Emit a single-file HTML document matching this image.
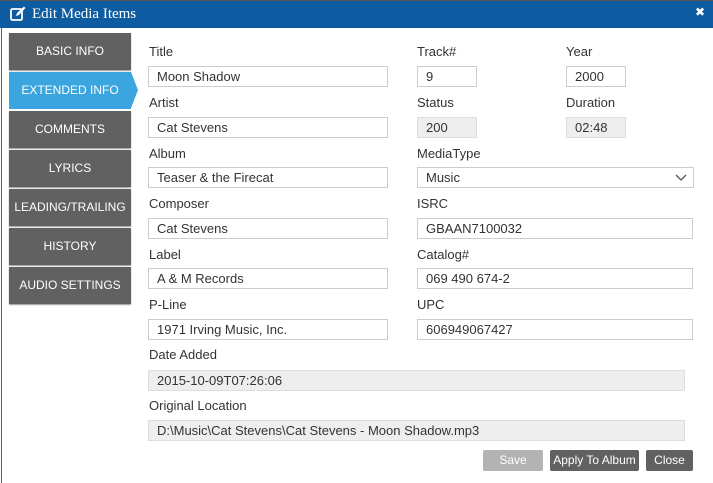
<!DOCTYPE html><html><head><style>
body{margin:0;width:713px;height:483px;overflow:hidden;background:#fff;font-family:"Liberation Sans",sans-serif;position:relative}
.t{position:absolute;left:0;top:0;width:713px;height:28px;background:#0d5ba0;color:#fff;font-family:"Liberation Serif",serif;font-size:15px;border-top:1px solid #555;box-sizing:border-box}
.tab{position:absolute;left:9px;width:122px;height:37px;background:#616161;color:#fff;font-size:12px;text-align:center;line-height:37px;box-shadow:0 1px 1px #999}
.tab.a{background:#3ba5e0;box-shadow:none}
.l{position:absolute;font-size:13px;color:#333}
.i{position:absolute;border:1px solid #ccc;font-size:13px;color:#333;line-height:19px;padding-left:8px;box-sizing:border-box;height:21px}
.g{background:#eee;border-color:#ddd}
.b{position:absolute;top:450px;height:21px;color:#fff;font-size:12px;text-align:center;line-height:21px;border-radius:2px;background:#616161}
</style></head><body>
<div class="t"><svg style="position:absolute;left:10px;top:5px" width="16" height="16" viewBox="0 0 16 16"><rect x="1" y="3" width="11" height="11" rx="1.5" fill="none" stroke="#fff" stroke-width="1.8"/><path d="M6 10 L7 7 L14 0.5 L15.5 2 L9 9 Z" fill="#fff"/></svg><span style="position:absolute;left:32px;top:5px">Edit Media Items</span><span style="position:absolute;right:8px;top:4px;font-family:'DejaVu Sans';font-size:12px;font-weight:bold">✖</span></div>
<div style="position:absolute;left:1px;top:28px;width:1px;height:455px;background:#2f6f80"></div>
<div class="tab" style="top:33px">BASIC INFO</div>
<div class="tab a" style="top:72px">EXTENDED INFO</div>
<div style="position:absolute;left:131px;top:72px;width:0;height:0;border-top:18.5px solid transparent;border-bottom:18.5px solid transparent;border-left:7px solid #3ba5e0"></div>
<div class="tab" style="top:111px">COMMENTS</div>
<div class="tab" style="top:150px">LYRICS</div>
<div class="tab" style="top:189px">LEADING/TRAILING</div>
<div class="tab" style="top:228px">HISTORY</div>
<div class="tab" style="top:267px">AUDIO SETTINGS</div>

<div class="l" style="left:149px;top:44px">Title</div><div class="i" style="left:148px;top:66px;width:240px">Moon Shadow</div>
<div class="l" style="left:417px;top:44px">Track#</div><div class="i" style="left:417px;top:66px;width:60px">9</div>
<div class="l" style="left:566px;top:44px">Year</div><div class="i" style="left:566px;top:66px;width:60px">2000</div>

<div class="l" style="left:149px;top:95px">Artist</div><div class="i" style="left:148px;top:117px;width:240px">Cat Stevens</div>
<div class="l" style="left:417px;top:95px">Status</div><div class="i g" style="left:417px;top:117px;width:60px">200</div>
<div class="l" style="left:566px;top:95px">Duration</div><div class="i g" style="left:566px;top:117px;width:60px">02:48</div>

<div class="l" style="left:149px;top:146px">Album</div><div class="i" style="left:148px;top:167px;width:240px">Teaser &amp; the Firecat</div>
<div class="l" style="left:417px;top:146px">MediaType</div><div class="i" style="left:417px;top:167px;width:277px">Music<svg style="position:absolute;right:6px;top:6px" width="12" height="8"><path d="M1 1 L6 6 L11 1" fill="none" stroke="#555" stroke-width="1.3"/></svg></div>

<div class="l" style="left:149px;top:196px">Composer</div><div class="i" style="left:148px;top:218px;width:240px">Cat Stevens</div>
<div class="l" style="left:417px;top:196px">ISRC</div><div class="i" style="left:417px;top:218px;width:276px">GBAAN7100032</div>

<div class="l" style="left:149px;top:247px">Label</div><div class="i" style="left:148px;top:268px;width:240px">A &amp; M Records</div>
<div class="l" style="left:417px;top:247px">Catalog#</div><div class="i" style="left:417px;top:268px;width:276px">069 490 674-2</div>

<div class="l" style="left:149px;top:297px">P-Line</div><div class="i" style="left:148px;top:319px;width:240px">1971 Irving Music, Inc.</div>
<div class="l" style="left:417px;top:297px">UPC</div><div class="i" style="left:417px;top:319px;width:276px">606949067427</div>

<div class="l" style="left:149px;top:347px">Date Added</div><div class="i g" style="left:148px;top:370px;width:537px">2015-10-09T07:26:06</div>
<div class="l" style="left:149px;top:398px">Original Location</div><div class="i g" style="left:148px;top:420px;width:537px">D:\Music\Cat Stevens\Cat Stevens - Moon Shadow.mp3</div>

<div class="b" style="left:483px;width:60px;background:#b3b3b3">Save</div>
<div class="b" style="left:550px;width:89px">Apply To Album</div>
<div class="b" style="left:646px;width:47px">Close</div>
</body></html>
